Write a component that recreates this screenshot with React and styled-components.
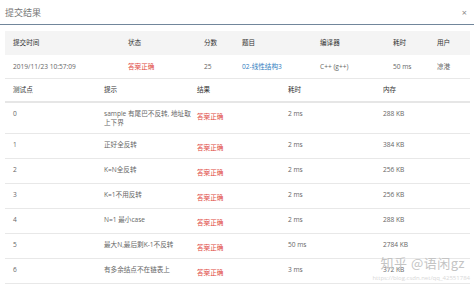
import React from 'react';
import styled, { createGlobalStyle } from 'styled-components';

const GlobalStyle = createGlobalStyle`
  html, body {
    margin: 0;
    padding: 0;
    background: #fff;
  }
  body {
    font-family: 'Open Sans', 'Noto Sans CJK SC', sans-serif;
    width: 474px;
    height: 284px;
    overflow: hidden;
  }
`;

const Dialog = styled.div`
  position: relative;
  width: 474px;
  height: 284px;
  background: #fff;
`;

const Header = styled.div`
  display: flex;
  align-items: center;
  justify-content: space-between;
  height: 25px;
  padding: 0 7px 0 5px;
  border-bottom: 1px solid #71869b;
  box-sizing: border-box;
`;

const Title = styled.span`
  font-size: 9px;
  color: #777;
`;

const Close = styled.span`
  font-size: 9px;
  color: #888;
`;

const Body = styled.div`
  padding: 6px 4px 0 5px;
`;

const Table = styled.table`
  width: 465px;
  border-collapse: collapse;
  table-layout: fixed;
  font-size: 6.6px;
  line-height: 9.5px;
  margin-bottom: ${(p) => p.$gap || 0}px;
`;

const Th = styled.th`
  text-align: left;
  font-weight: normal;
  color: #333;
  padding: ${(p) => (p.$shaded ? '7px 8px' : '5px 8px 6px')};
  background: ${(p) => (p.$shaded ? '#f4f4f4' : '#fff')};
  border-bottom: ${(p) => (p.$shaded ? '0' : '2px solid #e6e6e6')};
`;

const Td = styled.td`
  text-align: left;
  vertical-align: top;
  color: #666;
  white-space: nowrap;
  padding: ${(p) => (p.$compact ? '7px 8px' : '6px 0 5.5px 8px')};
  border-bottom: 1px solid #e8e8e8;
`;

const Pass = styled.span`
  display: inline-block;
  color: #e0483e;
  margin-top: ${(p) => (p.$flat ? 0 : 3)}px;
`;

const Link = styled.span`
  color: #2f7cc0;
`;

const Mark = styled.div`
  position: absolute;
  right: 9px;
  bottom: 12px;
  font-size: 13px;
  color: #c4c4c4;
  letter-spacing: 0.5px;
  font-family: 'Noto Sans CJK SC', sans-serif;
`;

const MarkUrl = styled.div`
  position: absolute;
  right: 4px;
  bottom: 2px;
  font-size: 6px;
  color: #d8d8d8;
`;

const summaryCols = [115, 76, 38, 78, 73, 44, 41];
const detailCols = [91, 93, 91, 95, 95];

const cases = [
  { id: 0, hint: ['sample 有尾巴不反转, 地址取', '上下界'], time: '2 ms', mem: '288 KB' },
  { id: 1, hint: ['正好全反转'], time: '2 ms', mem: '384 KB' },
  { id: 2, hint: ['K=N全反转'], time: '2 ms', mem: '256 KB' },
  { id: 3, hint: ['K=1不用反转'], time: '2 ms', mem: '256 KB' },
  { id: 4, hint: ['N=1 最小case'], time: '2 ms', mem: '288 KB' },
  { id: 5, hint: ['最大N,最后剩K-1不反转'], time: '50 ms', mem: '2784 KB' },
  { id: 6, hint: ['有多余结点不在链表上'], time: '3 ms', mem: '372 KB' },
];

export default function App() {
  return (
    <Dialog>
      <GlobalStyle />
      <Header>
        <Title>提交结果</Title>
        <Close>×</Close>
      </Header>

      <Body>
        {/* summary */}
        <Table $gap={1}>
          <colgroup>
            {summaryCols.map((w, i) => (
              <col key={i} style={{ width: w }} />
            ))}
          </colgroup>
          <thead>
            <tr>
              {['提交时间', '状态', '分数', '题目', '编译器', '耗时', '用户'].map((h) => (
                <Th key={h} $shaded>
                  {h}
                </Th>
              ))}
            </tr>
          </thead>
          <tbody>
            <tr>
              <Td $compact>2019/11/23 10:57:09</Td>
              <Td $compact>
                <Pass $flat>答案正确</Pass>
              </Td>
              <Td $compact>25</Td>
              <Td $compact>
                <Link>02-线性结构3</Link>
              </Td>
              <Td $compact>C++ (g++)</Td>
              <Td $compact>50 ms</Td>
              <Td $compact>凉港</Td>
            </tr>
          </tbody>
        </Table>

        {/* test points */}
        <Table>
          <colgroup>
            {detailCols.map((w, i) => (
              <col key={i} style={{ width: w }} />
            ))}
          </colgroup>
          <thead>
            <tr>
              {['测试点', '提示', '结果', '耗时', '内存'].map((h) => (
                <Th key={h}>{h}</Th>
              ))}
            </tr>
          </thead>
          <tbody>
            {cases.map((c) => (
              <tr key={c.id}>
                <Td>{c.id}</Td>
                <Td>
                  {c.hint.map((line, i) => (
                    <div key={i}>{line}</div>
                  ))}
                </Td>
                <Td>
                  <Pass>答案正确</Pass>
                </Td>
                <Td>{c.time}</Td>
                <Td>{c.mem}</Td>
              </tr>
            ))}
          </tbody>
        </Table>
      </Body>

      <Mark>知乎 @语闲gz</Mark>
      <MarkUrl>https://blog.csdn.net/qq_42551784</MarkUrl>
    </Dialog>
  );
}
